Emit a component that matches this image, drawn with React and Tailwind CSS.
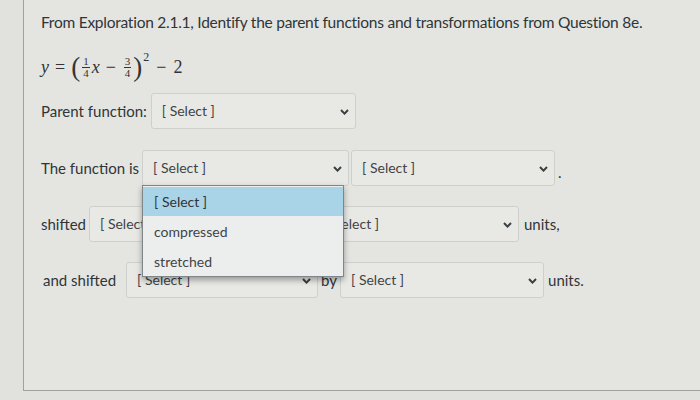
import React from 'react';

const Chevron = () => (
  <svg width="9" height="6" viewBox="0 0 9 6" className="shrink-0">
    <polyline points="1,1 4.5,4.6 8,1" fill="none" stroke="#3a3f42" strokeWidth="2" />
  </svg>
);

const Select = ({ width, children }) => (
  <div
    className="relative h-[36px] shrink-0 rounded-[3px] border border-[#cdd0cc] bg-[#e8e9e5]"
    style={{ width }}
  >
    <span className="absolute left-[10px] top-[6px] text-[14px] text-[#3f4447]">[ Select ]</span>
    <span className="absolute right-[6px] top-[15px]">
      <Chevron />
    </span>
    {children}
  </div>
);

const Frac = ({ top, bottom }) => (
  <span className="mx-[2px] inline-flex flex-col items-center text-[11px] leading-[11px]">
    <span className="border-b border-[#333] px-[1px]">{top}</span>
    <span className="px-[1px]">{bottom}</span>
  </span>
);

const App = () => {
  return (
    <div className="h-[400px] w-[700px] overflow-hidden bg-[#e1e2de] font-['Lato','Open_Sans',sans-serif] text-[#2f3538]">
      <div className="ml-[23px] h-[391px] border-b border-l border-[#9fa29e] bg-[#e4e5e1] pl-[17px] pt-[11px]">
        <p className="text-[15.5px] leading-[22px] tracking-[-0.25px]">
          From Exploration 2.1.1, Identify the parent functions and transformations from Question 8e.
        </p>

        <div className="mt-[20px] flex h-[28px] items-center font-['Liberation_Serif',serif] text-[18px] text-[#333]">
          <span className="italic">y</span>
          <span className="mx-[6px]">=</span>
          <span className="text-[27px] font-light leading-none">(</span>
          <Frac top="1" bottom="4" />
          <span className="italic">x</span>
          <span className="mx-[6px]">−</span>
          <Frac top="3" bottom="4" />
          <span className="text-[27px] font-light leading-none">)</span>
          <span className="relative top-[-10px] ml-[1px] text-[12px]">2</span>
          <span className="mx-[7px]">−</span>
          <span>2</span>
        </div>

        <div className="mt-[12px] flex items-center">
          <span className="text-[15px]">Parent function:</span>
          <div className="ml-[4px]">
            <Select width={205} />
          </div>
        </div>

        <div className="mt-[21px] flex items-center">
          <span className="text-[15px]">The function is</span>
          <div className="relative z-10 ml-[3px]">
            <Select width={207} />
            <div className="absolute left-0 top-[35px] w-[202px] border border-[#80858a] bg-[#eceeed] pt-[1px] shadow-[0_3px_6px_rgba(0,0,0,0.35)]">
              <div className="flex h-[29px] items-center bg-[#a9d3e7] pl-[11px] text-[14px] text-[#2f3538]">
                [ Select ]
              </div>
              <div className="flex h-[30px] items-center pl-[11px] text-[14px] text-[#3f4447]">compressed</div>
              <div className="flex h-[30px] items-center pl-[11px] text-[14px] text-[#3f4447]">stretched</div>
            </div>
          </div>
          <div className="ml-[2px]">
            <Select width={204} />
          </div>
          <span className="ml-[3px] mt-[8px] text-[15px]">.</span>
        </div>

        <div className="mt-[20px] flex items-center">
          <span className="text-[15px]">shifted</span>
          <div className="ml-[3px]">
            <Select width={202} />
          </div>
          <span className="mx-[4px] text-[15px]">by</span>
          <Select width={204} />
          <span className="ml-[5px] text-[15px]">units,</span>
        </div>

        <div className="mt-[20px] flex items-center">
          <span className="ml-[2px] text-[15px]">and shifted</span>
          <div className="ml-[10px]">
            <Select width={192} />
          </div>
          <span className="mx-[3px] text-[15px]">by</span>
          <Select width={204} />
          <span className="ml-[4px] text-[15px]">units.</span>
        </div>
      </div>
    </div>
  );
};

export default App;
